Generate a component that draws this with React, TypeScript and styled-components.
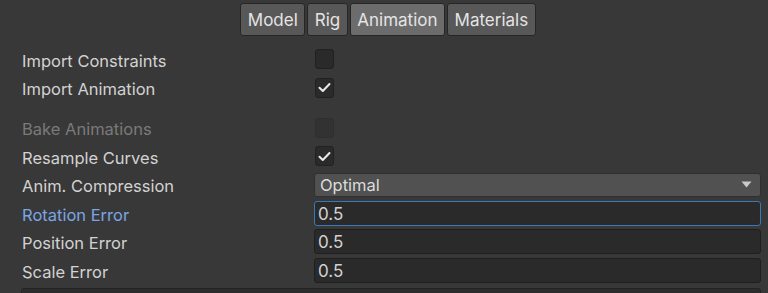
import styled, { createGlobalStyle, css } from 'styled-components';

const GlobalStyle = createGlobalStyle`
	html, body {
		margin: 0;
		padding: 0;
		background: #383838;
		font-family: Inter, "Noto Sans", sans-serif;
	}
	#root {
		height: 293px;
		overflow: hidden;
	}
`

const Inspector = styled.div`
	background: #383838;
	color: #d2d2d2;
	font-size: 16.5px;
	padding: 3px 7px 0 21px;
	height: 293px;
	box-sizing: border-box;
`

const TabBar = styled.div`
	display: flex;
	justify-content: center;
	gap: 2px;
	padding-right: 6px;
	margin-bottom: 9px;
`

const Tab = styled.div<{ $active?: boolean }>`
	height: 33px;
	box-sizing: border-box;
	display: flex;
	align-items: center;
	padding: 1px 6.5px 0;
	border: 1px solid #262626;
	border-radius: 3px;
	background: ${p => (p.$active ? '#6c6c6c' : '#585858')};
	color: #e4e4e4;
	font-size: 17px;
`

const Row = styled.div<{ $spaced?: boolean }>`
	display: grid;
	grid-template-columns: 293px 1fr;
	align-items: center;
	height: 28.5px;
	${p => p.$spaced && css`margin-top: 11.5px;`}
`

const Label = styled.span<{ $tone?: 'normal' | 'disabled' | 'focus' }>`
	padding: 3px 0 0 1px;
	color: ${p => (p.$tone === 'disabled' ? '#7a7a7a' : p.$tone === 'focus' ? '#7aa5e4' : '#d2d2d2')};
`

const Box = styled.div<{ $disabled?: boolean }>`
	width: 19px;
	height: 20px;
	box-sizing: border-box;
	margin-left: 1px;
	border: 1px solid ${p => (p.$disabled ? '#2e2e2e' : '#212121')};
	border-radius: 3px;
	background: ${p => (p.$disabled ? '#323232' : '#2a2a2a')};
	display: flex;
	align-items: center;
	justify-content: center;
`

const Select = styled.div`
	height: 24px;
	box-sizing: border-box;
	border: 1px solid #303030;
	border-radius: 3px;
	background: #515151;
	color: #dcdcdc;
	display: flex;
	align-items: center;
	justify-content: space-between;
	padding: 0 8px 0 5px;
`

const Field = styled.div<{ $focused?: boolean }>`
	height: 25px;
	box-sizing: border-box;
	border: 1px solid ${p => (p.$focused ? '#3b78b8' : '#1f1f1f')};
	border-radius: 3px;
	background: #2a2a2a;
	color: #d2d2d2;
	display: flex;
	align-items: center;
	padding: 1px 3px 0;
	font-size: 17px;
`

const Footer = styled.div`
	margin-top: 3px;
	height: 30px;
	border: 1px solid #232323;
	border-radius: 3px;
	background: #2d2d2d;
`

function Check() {
	return (
		<svg width="13" height="11" viewBox="0 0 13 11">
			<path d="M1.5 5.8 L4.8 9 L11.5 2" fill="none" stroke="#eaeaea" strokeWidth="2" strokeLinecap="round" strokeLinejoin="round" />
		</svg>
	)
}

function Toggle({ checked, disabled }: { checked?: boolean, disabled?: boolean }) {
	return <Box $disabled={disabled}>{checked && <Check />}</Box>
}

//main component
export default function App() {
	return (
		<>
			<GlobalStyle />
			<Inspector>
				<TabBar>
					<Tab>Model</Tab>
					<Tab>Rig</Tab>
					<Tab $active>Animation</Tab>
					<Tab>Materials</Tab>
				</TabBar>

				<Row><Label>Import Constraints</Label><Toggle /></Row>
				<Row><Label>Import Animation</Label><Toggle checked /></Row>

				<Row $spaced><Label $tone="disabled">Bake Animations</Label><Toggle disabled /></Row>
				<Row><Label>Resample Curves</Label><Toggle checked /></Row>
				<Row>
					<Label>Anim. Compression</Label>
					<Select>
						<span>Optimal</span>
						<svg width="11" height="7" viewBox="0 0 11 7">
							<path d="M0.5 0.5 H10.5 L5.5 6.5 Z" fill="#c8c8c8" />
						</svg>
					</Select>
				</Row>
				<Row><Label $tone="focus">Rotation Error</Label><Field $focused>0.5</Field></Row>
				<Row><Label>Position Error</Label><Field>0.5</Field></Row>
				<Row><Label>Scale Error</Label><Field>0.5</Field></Row>
				<Footer />
			</Inspector>
		</>
	)
}
